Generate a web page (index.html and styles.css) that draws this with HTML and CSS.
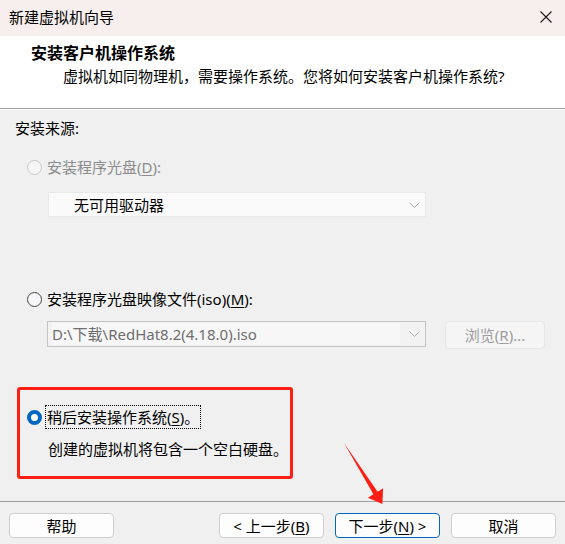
FILE: index.html
```html
<!DOCTYPE html>
<html lang="zh-CN">
<head>
    <meta charset="UTF-8">
    <title>新建虚拟机向导</title>
    <link rel="stylesheet" href="styles.css">
</head>
<body>
    <div class="window">
        <!-- Title bar -->
        <div class="titlebar">
            <span class="title">新建虚拟机向导</span>
            <svg class="close" width="12" height="12" viewBox="0 0 12 12">
                <path d="M0.5 0.5 L11.5 11.5 M11.5 0.5 L0.5 11.5" stroke="#1a1a1a" stroke-width="1.1" fill="none"/>
            </svg>
        </div>

        <!-- Header -->
        <div class="header">
            <div class="header-title">安装客户机操作系统</div>
            <div class="header-desc">虚拟机如同物理机，需要操作系统。您将如何安装客户机操作系统?</div>
        </div>

        <!-- Main content -->
        <div class="content">
            <div class="group-label">安装来源:</div>

            <div class="option disabled first">
                <span class="radio"></span>
                <span>安装程序光盘(<u>D</u>):</span>
            </div>
            <div class="select drive">
                <span>无可用驱动器</span>
                <svg class="chevron" width="11" height="6" viewBox="0 0 11 6">
                    <path d="M0.5 0.5 L5.5 5.5 L10.5 0.5" stroke="#a8a8a8" fill="none"/>
                </svg>
            </div>

            <div class="option second">
                <span class="radio"></span>
                <span>安装程序光盘映像文件(iso)(<u>M</u>):</span>
            </div>
            <div class="iso-row">
                <div class="select iso">
                    <span class="iso-text">D:\下载\RedHat8.2(4.18.0).iso</span>
                    <svg class="chevron" width="11" height="6" viewBox="0 0 11 6">
                        <path d="M0.5 0.5 L5.5 5.5 L10.5 0.5" stroke="#b4b4b4" fill="none"/>
                    </svg>
                </div>
                <div class="browse-btn">浏览(<u>R</u>)...</div>
            </div>

            <div class="option third">
                <span class="radio checked"></span>
                <span class="focus">稍后安装操作系统(<u>S</u>)。</span>
            </div>
            <div class="note">创建的虚拟机将包含一个空白硬盘。</div>
        </div>

        <!-- Footer buttons -->
        <div class="footer">
            <button class="btn">帮助</button>
            <div class="btn-group">
                <button class="btn">&lt; 上一步(<u>B</u>)</button>
                <button class="btn default">下一步(<u>N</u>) &gt;</button>
                <button class="btn">取消</button>
            </div>
        </div>

        <!-- Annotations -->
        <div class="mark-box"></div>
        <svg class="mark-arrow" width="565" height="544" viewBox="0 0 565 544">
            <polygon points="344,443 377.6,491.7 383.1,488.2 382.4,504 367.9,497.8 373.4,494.3" fill="#ff1e14"/>
        </svg>
    </div>
</body>
</html>
```

FILE: styles.css
```css
/* General */
* {
    box-sizing: border-box;
}

html, body {
    margin: 0;
    width: 565px;
    height: 544px;
    overflow: hidden;
    font-family: "Noto Sans", "Noto Sans CJK SC", sans-serif;
    font-size: 15px;
    color: #000;
    background: #f0f0f0;
}

.window {
    position: relative;
    width: 565px;
    height: 544px;
}

u {
    text-decoration-thickness: 1px;
    text-underline-offset: 2px;
}

/* Title bar */
.titlebar {
    height: 36px;
    padding: 0 13px 2px 9px;
    display: flex;
    align-items: center;
    justify-content: space-between;
    background: #f7efed;
}

.title {
    line-height: 20px;
}

/* Header */
.header {
    height: 73px;
    padding-top: 6px;
    background: #fff;
    border-bottom: 1px solid #a0a0a0;
}

.header-title {
    padding-left: 31px;
    font-size: 16px;
    font-weight: bold;
    line-height: 22px;
}

.header-desc {
    padding-left: 63px;
    line-height: 22px;
    margin-top: 1px;
}

/* Content */
.content {
    height: 392px;
    padding-left: 15px;
    border-top: 1px solid #fff;
}

.group-label {
    margin-top: 8px;
    line-height: 20px;
}

.option {
    display: flex;
    align-items: center;
    gap: 5px;
    height: 20px;
    padding-left: 12px;
    line-height: 20px;
}

.option.first { margin-top: 19px; }
.option.second { margin-top: 72px; }
.option.third { margin-top: 58px; }

.option.disabled {
    color: #8c8c8c;
}

.radio {
    width: 15px;
    height: 15px;
    border-radius: 50%;
    border: 1px solid #454545;
    background: #f7f7f7;
    flex-shrink: 0;
}

.disabled .radio {
    border-color: #c8c8c8;
    background: #f6f6f6;
}

.radio.checked {
    border: 4.5px solid #0067c0;
    background: #fff;
}

.focus {
    margin-left: -1px;
    padding: 0 1px;
    height: 22px;
    outline: 1px dotted #000;
    outline-offset: 0;
    line-height: 22px;
}

/* Select boxes */
.select {
    display: flex;
    align-items: center;
    justify-content: space-between;
}

.select.drive {
    margin: 15px 0 0 33px;
    width: 378px;
    height: 25px;
    padding: 0 5px 0 25px;
    background: #fafafa;
    border: 1px solid #e8e8e8;
}

.iso-row {
    display: flex;
    align-items: flex-start;
    margin-top: 12px;
}

.select.iso {
    margin-left: 32px;
    width: 379px;
    height: 26px;
    padding: 0 5px 0 4px;
    background: #f2f2f2;
    border: 1px solid #c4c4c4;
    color: #6e6e6e;
}

.iso-text {
    flex: 1;
    height: 22px;
    line-height: 22px;
    background: #f7f7f7;
    margin-right: 9px;
}

.browse-btn {
    margin-left: 19px;
    width: 100px;
    height: 28px;
    line-height: 27px;
    text-align: center;
    color: #9d9d9d;
    background: #f5f5f5;
    border: 1px solid #e6e6e6;
    border-radius: 4px;
}

.note {
    margin-top: 12px;
    padding-left: 33px;
    line-height: 20px;
}

/* Footer */
.footer {
    display: flex;
    justify-content: space-between;
    padding: 11px 9px 0 9px;
    border-top: 1px solid #a0a0a0;
}

.btn-group {
    display: flex;
    gap: 11px;
}

.btn {
    width: 105px;
    height: 25px;
    padding: 0;
    font-family: inherit;
    font-size: 15px;
    color: #000;
    background: #fdfdfd;
    border: 1px solid #d0d0d0;
    border-radius: 4px;
}

.btn.default {
    border-color: #0067c0;
}

/* Annotations */
.mark-box {
    position: absolute;
    left: 17px;
    top: 387px;
    width: 276px;
    height: 92px;
    border: 3px solid #ff1e14;
    border-radius: 3px;
}

.mark-arrow {
    position: absolute;
    left: 0;
    top: 0;
}
```
